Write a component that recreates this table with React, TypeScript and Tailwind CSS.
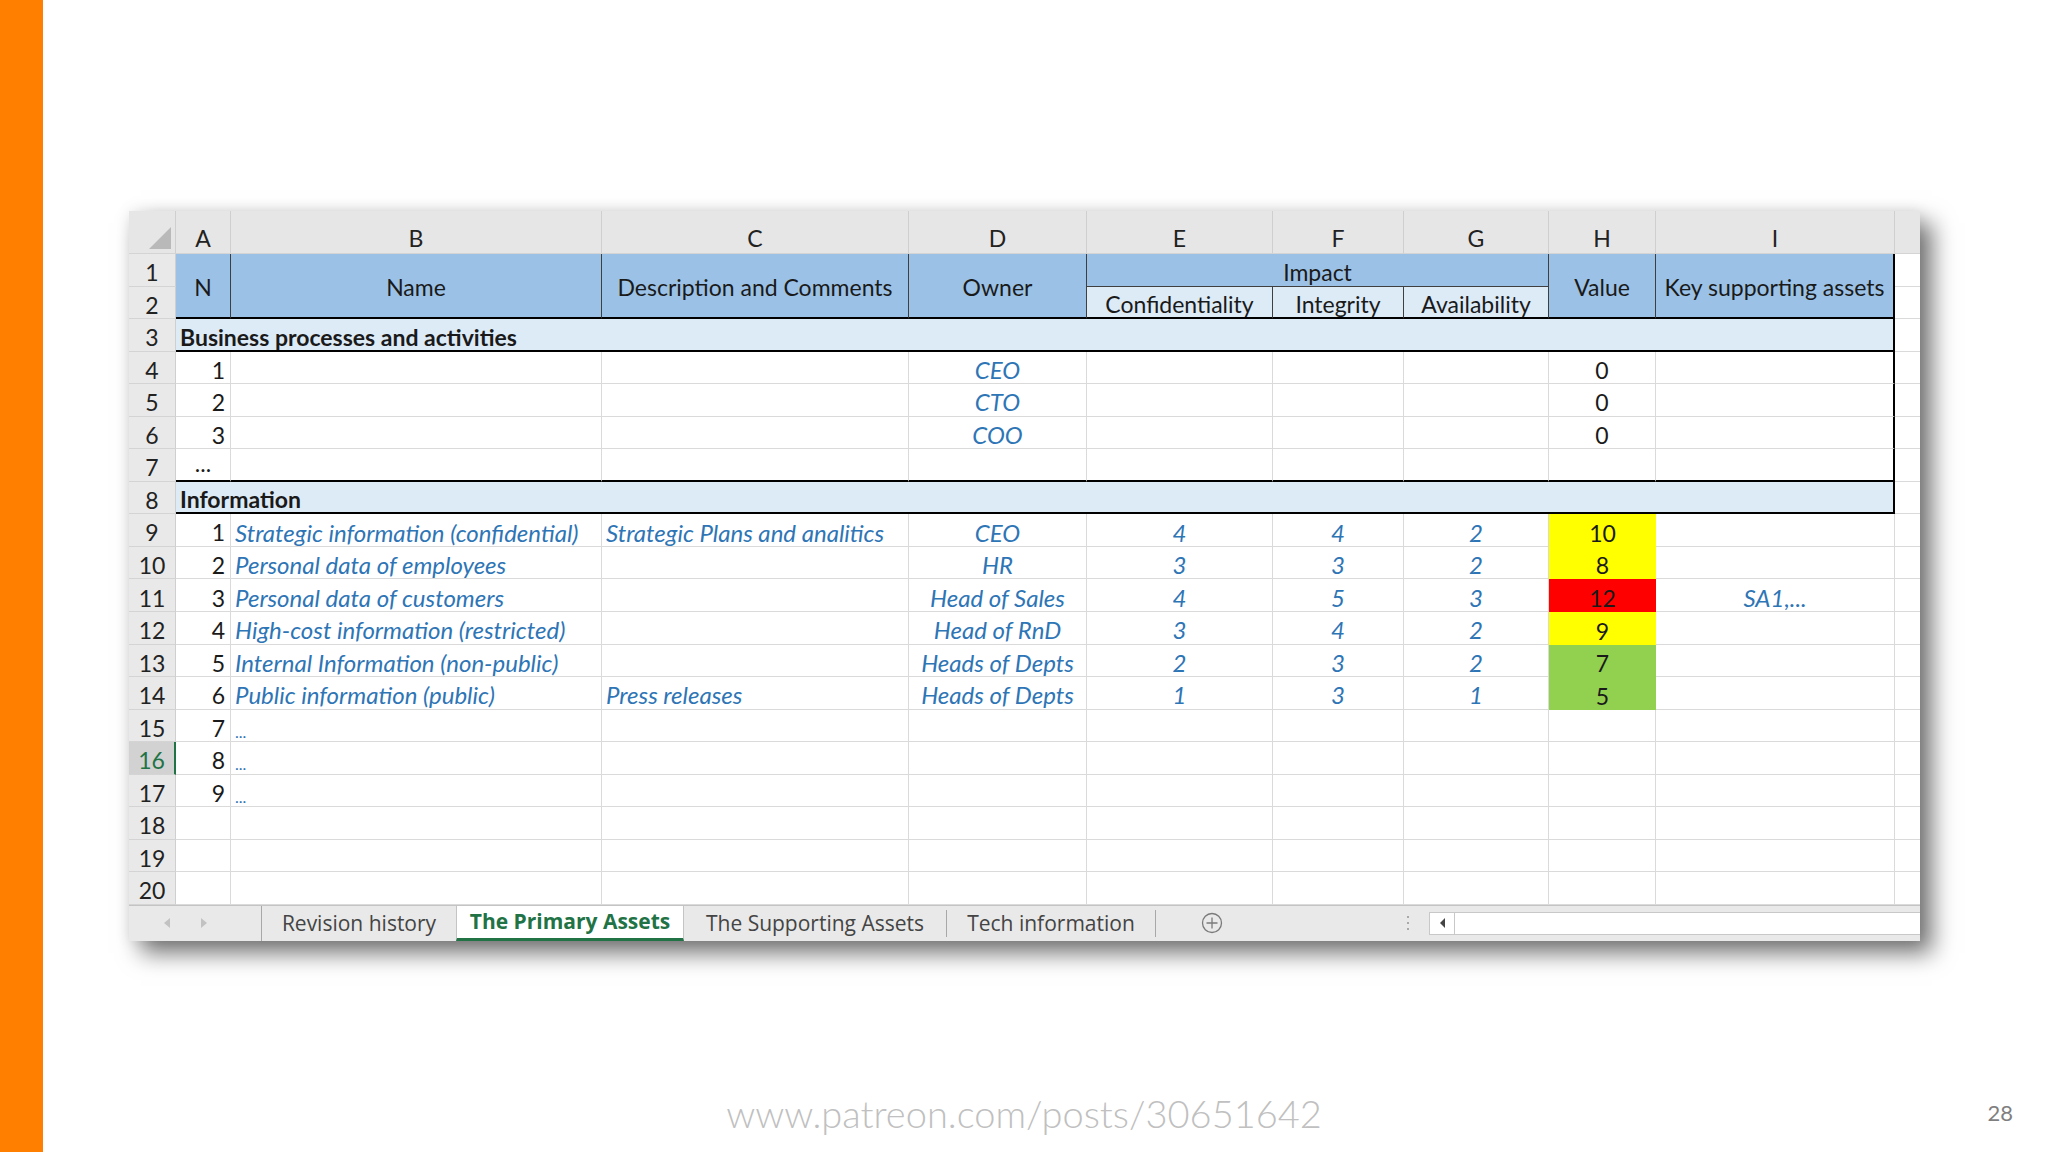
import React from "react";

type Edge = "g" | "d" | "t" | "h" | "s" | "n";

const RIGHT: Record<Edge, string> = {
  g: "border-r border-r-[#dadada]",
  d: "border-r border-r-[#3f3f3f]",
  t: "border-r-2 border-r-black",
  h: "border-r border-r-[#cfcfcf]",
  s: "border-r-2 border-r-[#217346]",
  n: "",
};

const BOTTOM: Record<Edge, string> = {
  g: "border-b border-b-[#dadada]",
  d: "border-b border-b-[#3f3f3f]",
  t: "border-b-2 border-b-black",
  h: "border-b border-b-[#d4d4d4]",
  s: "",
  n: "",
};

const Cell: React.FC<{
  r?: Edge;
  b?: Edge;
  pad?: string;
  className?: string;
  children?: React.ReactNode;
}> = ({ r = "g", b = "g", pad = "pt-[5px]", className = "", children }) => (
  <div
    className={`flex items-center overflow-hidden whitespace-nowrap ${RIGHT[r]} ${BOTTOM[b]} ${pad} ${className}`}
  >
    {children}
  </div>
);

type Line = {
  a?: string;
  b?: string;
  c?: string;
  d?: string;
  e?: string;
  f?: string;
  g?: string;
  h?: string;
  fill?: string;
  i?: string;
  dots?: boolean;
};

const BUSINESS: Line[] = [
  { a: "1", d: "CEO", h: "0" },
  { a: "2", d: "CTO", h: "0" },
  { a: "3", d: "COO", h: "0" },
  { a: "..." },
];

const INFO: Line[] = [
  {
    a: "1",
    b: "Strategic information (confidential)",
    c: "Strategic Plans and analitics",
    d: "CEO",
    e: "4",
    f: "4",
    g: "2",
    h: "10",
    fill: "bg-[#ffff00]",
  },
  { a: "2", b: "Personal data of employees", d: "HR", e: "3", f: "3", g: "2", h: "8", fill: "bg-[#ffff00]" },
  {
    a: "3",
    b: "Personal data of customers",
    d: "Head of Sales",
    e: "4",
    f: "5",
    g: "3",
    h: "12",
    fill: "bg-[#ff0000]",
    i: "SA1,...",
  },
  { a: "4", b: "High-cost information (restricted)", d: "Head of RnD", e: "3", f: "4", g: "2", h: "9", fill: "bg-[#ffff00]" },
  { a: "5", b: "Internal Information (non-public)", d: "Heads of Depts", e: "2", f: "3", g: "2", h: "7", fill: "bg-[#92d050]" },
  {
    a: "6",
    b: "Public information (public)",
    c: "Press releases",
    d: "Heads of Depts",
    e: "1",
    f: "3",
    g: "1",
    h: "5",
    fill: "bg-[#92d050]",
  },
  { a: "7", b: "...", dots: true },
  { a: "8", b: "...", dots: true },
  { a: "9", b: "...", dots: true },
  {},
  {},
  {},
];

const blue = "italic text-[24px] text-[#2e75b6]";

const RowHead: React.FC<{ n: number }> = ({ n }) =>
  n === 16 ? (
    <Cell r="s" b="h" className="justify-center bg-[#d2d2d2] text-[#217346]">
      {n}
    </Cell>
  ) : (
    <Cell r="h" b="h" className="justify-center bg-[#e9e9e9] text-[#222]">
      {n}
    </Cell>
  );

const DataRow: React.FC<{ n: number; line: Line; boxed?: boolean; last?: boolean }> = ({
  n,
  line,
  boxed,
  last,
}) => {
  const b: Edge = last ? "t" : "g";
  return (
    <>
      <RowHead n={n} />
      {line.a === "..." ? (
        <Cell b={b} pad="pb-[2px]" className="justify-center">
          {line.a}
        </Cell>
      ) : (
        <Cell b={b} className="justify-end pr-[5px]">
          {line.a}
        </Cell>
      )}
      {line.dots ? (
        <Cell b={b} pad="pt-[13px]" className="pl-[4px] text-[16px] text-[#2e75b6]">
          {line.b}
        </Cell>
      ) : (
        <Cell b={b} className={`pl-[4px] ${blue}`}>
          {line.b}
        </Cell>
      )}
      <Cell b={b} className={`pl-[4px] ${blue}`}>
        {line.c}
      </Cell>
      <Cell b={b} className={`justify-center ${blue}`}>
        {line.d}
      </Cell>
      <Cell b={b} className={`justify-center ${blue}`}>
        {line.e}
      </Cell>
      <Cell b={b} className={`justify-center ${blue}`}>
        {line.f}
      </Cell>
      <Cell b={b} className={`justify-center ${blue}`}>
        {line.g}
      </Cell>
      {line.fill ? (
        <Cell r="n" b="n" className={`justify-center ${line.fill}`}>
          {line.h}
        </Cell>
      ) : (
        <Cell b={b} className="justify-center">
          {line.h}
        </Cell>
      )}
      <Cell r={boxed ? "t" : "g"} b={b} className={`justify-center ${blue}`}>
        {line.i}
      </Cell>
      <Cell r="n" />
    </>
  );
};

const Section: React.FC<{ n: number; title: string }> = ({ n, title }) => (
  <>
    <RowHead n={n} />
    <Cell r="t" b="t" className="col-span-9 bg-[#ddebf7] pl-[4px] font-bold">
      {title}
    </Cell>
    <Cell r="n" />
  </>
);

const Sheet: React.FC = () => {
  const head = "justify-center bg-[#9bc2e6]";
  return (
    <div className="w-[1791px] bg-white shadow-[12px_12px_22px_rgba(0,0,0,0.55),0_0_14px_rgba(0,0,0,0.08)] font-['Lato','Liberation_Sans',sans-serif] text-[23px] text-[#1a1a1a]">
      <div className="grid grid-cols-[47px_55px_371px_307px_178px_186px_131px_145px_107px_239px_25px] grid-rows-[43px_repeat(20,32.55px)]">
        {/* column letters */}
        <Cell r="h" b="h" pad="" className="relative bg-[#e6e6e6]">
          <svg className="absolute right-[4px] bottom-[4px]" width="22" height="22" viewBox="0 0 22 22">
            <polygon points="22,0 22,22 0,22" fill="#b9b9b9" />
          </svg>
        </Cell>
        {["A", "B", "C", "D", "E", "F", "G", "H", "I"].map((c) => (
          <Cell key={c} r="h" b="h" pad="pt-[12px]" className="justify-center bg-[#e6e6e6] text-[#222]">
            {c}
          </Cell>
        ))}
        <Cell r="n" b="h" pad="" className="bg-[#e6e6e6]" />

        {/* header row 1 */}
        <RowHead n={1} />
        <Cell r="d" b="t" pad="pt-[3px]" className={`row-span-2 ${head}`}>
          N
        </Cell>
        <Cell r="d" b="t" pad="pt-[3px]" className={`row-span-2 ${head}`}>
          Name
        </Cell>
        <Cell r="d" b="t" pad="pt-[3px]" className={`row-span-2 ${head}`}>
          Description and Comments
        </Cell>
        <Cell r="d" b="t" pad="pt-[3px]" className={`row-span-2 ${head}`}>
          Owner
        </Cell>
        <Cell r="d" b="d" pad="pt-[4px]" className={`col-span-3 ${head}`}>
          Impact
        </Cell>
        <Cell r="d" b="t" pad="pt-[3px]" className={`row-span-2 ${head}`}>
          Value
        </Cell>
        <Cell r="t" b="t" pad="pt-[3px]" className={`row-span-2 ${head}`}>
          Key supporting assets
        </Cell>
        <Cell r="n" />

        {/* header row 2 */}
        <RowHead n={2} />
        <Cell r="d" b="t" className="justify-center bg-[#ddebf7]">
          Confidentiality
        </Cell>
        <Cell r="d" b="t" className="justify-center bg-[#ddebf7]">
          Integrity
        </Cell>
        <Cell r="d" b="t" className="justify-center bg-[#ddebf7]">
          Availability
        </Cell>
        <Cell r="n" />

        <Section n={3} title="Business processes and activities" />
        {BUSINESS.map((line, k) => (
          <DataRow key={k} n={4 + k} line={line} boxed last={k === BUSINESS.length - 1} />
        ))}
        <Section n={8} title="Information" />
        {INFO.map((line, k) => (
          <DataRow key={k} n={9 + k} line={line} />
        ))}
      </div>

      {/* sheet tabs */}
      <div className="flex h-[36px] items-stretch border-t border-[#c4c4c4] bg-[#e9e9e9] font-['Open_Sans',sans-serif] text-[21px] text-[#444]">
        <div className="flex w-[132px] items-center">
          <svg className="ml-[34px]" width="8" height="12" viewBox="0 0 8 12">
            <polygon points="7,1 7,11 1,6" fill="#c2c2c2" />
          </svg>
          <svg className="ml-[29px]" width="8" height="12" viewBox="0 0 8 12">
            <polygon points="1,1 1,11 7,6" fill="#c2c2c2" />
          </svg>
        </div>
        <div className="w-px bg-[#a8a8a8]" />
        <div className="flex w-[194px] items-center justify-center">Revision history</div>
        <div className="flex w-[228px] items-center justify-center border-x border-[#c4c4c4] border-b-[3px] border-b-[#217346] bg-white font-bold text-[#217346]">
          The Primary Assets
        </div>
        <div className="flex w-[262px] items-center justify-center">The Supporting Assets</div>
        <div className="my-[4px] w-px bg-[#a8a8a8]" />
        <div className="flex w-[208px] items-center justify-center">Tech information</div>
        <div className="my-[4px] w-px bg-[#a8a8a8]" />
        <div className="flex w-[273px] items-center">
          <svg className="ml-[45px]" width="22" height="22" viewBox="0 0 22 22">
            <circle cx="11" cy="11" r="9.5" fill="none" stroke="#7a7a7a" strokeWidth="1.3" />
            <path d="M11 5.5v11M5.5 11h11" stroke="#7a7a7a" strokeWidth="1.3" />
          </svg>
          <div className="ml-auto mr-[20px] flex flex-col gap-[4px]">
            <div className="h-[2px] w-[2px] bg-[#a9a9a9]" />
            <div className="h-[2px] w-[2px] bg-[#a9a9a9]" />
            <div className="h-[2px] w-[2px] bg-[#a9a9a9]" />
          </div>
        </div>
        <div className="my-[6px] flex w-[26px] items-center justify-center border border-[#c8c8c8] bg-white">
          <svg width="7" height="12" viewBox="0 0 7 12">
            <polygon points="6,1 6,11 1,6" fill="#444" />
          </svg>
        </div>
        <div className="my-[6px] flex-1 border-y border-[#c8c8c8] bg-white" />
      </div>
    </div>
  );
};

export default function App() {
  return (
    <div className="flex h-[1152px] w-full overflow-hidden bg-white">
      <div className="w-[43px] shrink-0 bg-[#ff7f00]" />
      <div className="flex flex-1 flex-col">
        <div className="pl-[86px] pt-[211px]">
          <Sheet />
        </div>
        <div className="mt-[150px] flex items-center pr-[43px]">
          <div className="flex-1" />
          <div className="font-['Lato',sans-serif] text-[38px] font-light leading-[44px] text-[#c0c0c0]">
            www.patreon.com/posts/30651642
          </div>
          <div className="flex flex-1 justify-end">
            <span className="-mr-[8px] font-['Lato',sans-serif] text-[22px] text-[#7f7f7f]">28</span>
          </div>
        </div>
      </div>
    </div>
  );
}
